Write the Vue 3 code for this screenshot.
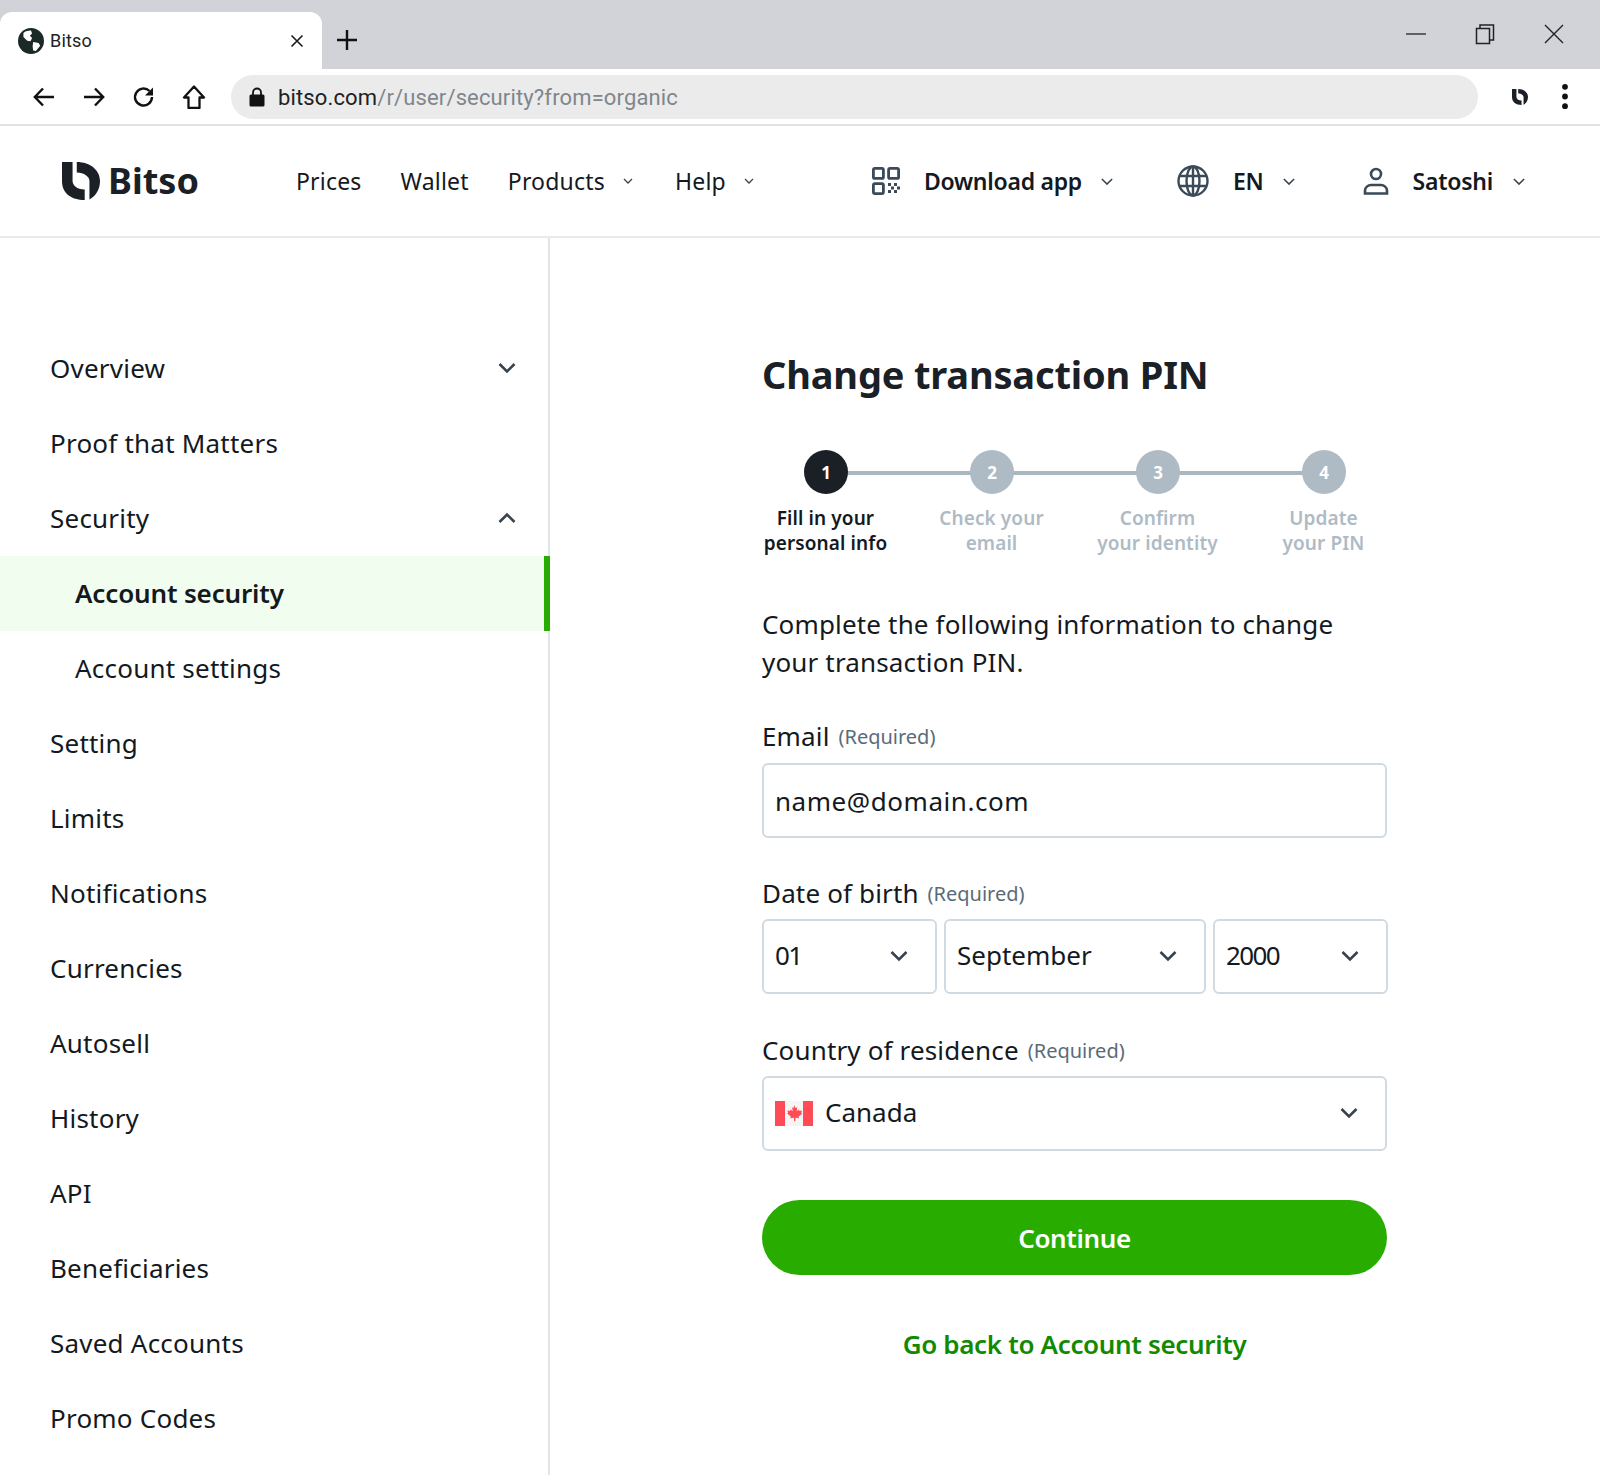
<script setup>
const nav = [
  { label: 'Overview', chevron: 'down' },
  { label: 'Proof that Matters' },
  { label: 'Security', chevron: 'up' },
  { label: 'Account security', sub: true, active: true },
  { label: 'Account settings', sub: true },
  { label: 'Setting' },
  { label: 'Limits' },
  { label: 'Notifications' },
  { label: 'Currencies' },
  { label: 'Autosell' },
  { label: 'History' },
  { label: 'API' },
  { label: 'Beneficiaries' },
  { label: 'Saved Accounts' },
  { label: 'Promo Codes' },
]
const steps = [
  { n: 1, a: 'Fill in your', b: 'personal info', on: true },
  { n: 2, a: 'Check your', b: 'email' },
  { n: 3, a: 'Confirm', b: 'your identity' },
  { n: 4, a: 'Update', b: 'your PIN' },
]
</script>

<template>
  <div class="page">
    <div class="tabstrip">
      <div class="tab">
        <svg class="favicon" viewBox="0 0 24 24"><circle cx="12" cy="12" r="12" fill="#1b2a26"/><path d="M5 4.500c2-1.600 4.500-2.300 7-2.200l1 2.700-2 2.200 2 2-1.500 3-3-.5-3.500-3.500zM14 13l5 .8 1.500 2.500-4 5-2.500-.5-.5-4z" fill="#fff"/></svg>
        <span class="tab-title">Bitso</span>
        <svg class="tab-x" viewBox="0 0 14 14"><path d="M1.500 1.500l11 11M12.500 1.500l-11 11" stroke="#1a1a1a" stroke-width="1.600"/></svg>
      </div>
      <svg class="newtab" viewBox="0 0 24 24"><path d="M12 2v20M2 12h20" stroke="#111" stroke-width="2.400"/></svg>
      <div class="winctl">
        <svg viewBox="0 0 22 22" class="win"><path d="M1 11h20" stroke="#222" stroke-width="1.300"/></svg>
        <svg viewBox="0 0 22 22" class="win"><path d="M2.500 5.500h13v15h-13zM6 5V2h13.500v15H16" fill="none" stroke="#222" stroke-width="1.500"/></svg>
        <svg viewBox="0 0 22 22" class="win"><path d="M2 2l18 18M20 2L2 20" stroke="#222" stroke-width="1.400"/></svg>
      </div>
    </div>

    <div class="toolbar">
      <div class="tool-icons">
        <svg viewBox="0 0 24 24" class="tool"><path d="M22 12H3M11 3.500L2.800 12l8.200 8.500" fill="none" stroke="#111" stroke-width="2.400"/></svg>
        <svg viewBox="0 0 24 24" class="tool"><path d="M2 12h19M13 3.500l8.200 8.500-8.200 8.500" fill="none" stroke="#111" stroke-width="2.400"/></svg>
        <svg viewBox="0 0 24 24" class="tool"><path d="M20 12a8.500 8.500 0 1 1-2.500-6" fill="none" stroke="#111" stroke-width="2.400"/><path d="M21 2.500v8h-8z" fill="#111"/></svg>
        <svg viewBox="0 0 24 24" class="tool"><path d="M12 1.500L2 12.500h4.500V23h11V12.500H22z" fill="none" stroke="#111" stroke-width="2.300" stroke-linejoin="round"/></svg>
      </div>
      <div class="omnibox">
        <svg class="lock" viewBox="0 0 16 20"><path d="M4 8V5.500a4 4 0 0 1 8 0V8" fill="none" stroke="#111" stroke-width="1.800"/><rect x="0.500" y="7.500" width="15" height="12" rx="1.500" fill="#111"/></svg>
        <span class="url"><span class="host">bitso.com</span>/r/user/security?from=organic</span>
      </div>
      <svg class="ext" viewBox="0 0 36 36">
        <path d="M0 0h10v18c0 4 4 8 11.500 8v10C9 36 0 30 0 18z" fill="#1a2026"/>
        <path d="M14 0c13 0 22 8 22 18 0 9-5 15-10 17.500V18c0-4-5-8-12-8z" fill="#1a2026"/>
      </svg>
      <svg class="menu-dots" viewBox="0 0 8 28"><circle cx="4" cy="4" r="3" fill="#111"/><circle cx="4" cy="14" r="3" fill="#111"/><circle cx="4" cy="24" r="3" fill="#111"/></svg>
    </div>

    <header class="site-header">
      <div class="logo">
        <svg class="logo-mark" viewBox="0 0 36 36">
          <path d="M0 0h10v18c0 4 4 8 11.500 8v10C9 36 0 30 0 18z" fill="#1a2026"/>
          <path d="M14 0c13 0 22 8 22 18 0 9-5 15-10 17.500V18c0-4-5-8-12-8z" fill="#1a2026"/>
        </svg>
        <span class="logo-text">Bitso</span>
      </div>
      <nav class="main-nav">
        <a>Prices</a>
        <a>Wallet</a>
        <a>Products<svg class="mini" viewBox="0 0 10 6"><path d="M1 1l4 4 4-4" fill="none" stroke="#38434d" stroke-width="1.300"/></svg></a>
        <a class="help">Help<svg class="mini" viewBox="0 0 10 6"><path d="M1 1l4 4 4-4" fill="none" stroke="#38434d" stroke-width="1.300"/></svg></a>
      </nav>
      <div class="head-actions">
        <div class="act act-dl">
          <svg class="qr" viewBox="0 0 28 28">
            <g fill="none" stroke="#3a4a58" stroke-width="2.800">
              <rect x="1.400" y="1.400" width="10" height="10" rx="1.500"/>
              <rect x="16.600" y="1.400" width="10" height="10" rx="1.500"/>
              <rect x="1.400" y="16.600" width="10" height="10" rx="1.500"/>
            </g>
            <g fill="#3a4a58">
              <rect x="16" y="16" width="3" height="3"/><rect x="22" y="16" width="3" height="3"/>
              <rect x="19" y="19.500" width="3" height="3"/><rect x="25" y="19.500" width="3" height="3"/>
              <rect x="16" y="23" width="3" height="3"/><rect x="22" y="23" width="3" height="3"/>
            </g>
          </svg>
          <b>Download app</b>
          <svg class="chev-s" viewBox="0 0 14 8"><path d="M1 1l6 6 6-6" fill="none" stroke="#38434d" stroke-width="1.800"/></svg>
        </div>
        <div class="act act-en">
          <svg class="globe" viewBox="0 0 32 32" fill="none" stroke="#3a4a58" stroke-width="2.400">
            <circle cx="16" cy="16" r="14.500"/><ellipse cx="16" cy="16" rx="6.500" ry="14.500"/><path d="M16 1.500v29M2.500 11h27M2.500 21h27"/>
          </svg>
          <b>EN</b>
          <svg class="chev-s" viewBox="0 0 14 8"><path d="M1 1l6 6 6-6" fill="none" stroke="#38434d" stroke-width="1.800"/></svg>
        </div>
        <div class="act act-user">
          <svg class="user" viewBox="0 0 26 28" fill="none" stroke="#3a4a58" stroke-width="2.600">
            <circle cx="13" cy="7" r="5"/><path d="M2 26.500v-3c0-3 3-5.500 6-5.500h10c3 0 6 2.500 6 5.500v3z"/>
          </svg>
          <b>Satoshi</b>
          <svg class="chev-s" viewBox="0 0 14 8"><path d="M1 1l6 6 6-6" fill="none" stroke="#38434d" stroke-width="1.800"/></svg>
        </div>
      </div>
    </header>

    <div class="body">
      <aside class="sidebar">
        <div v-for="item in nav" :key="item.label" class="side-item" :class="{ sub: item.sub, active: item.active }">
          <span class="side-text">{{ item.label }}</span>
          <svg v-if="item.chevron" class="side-chev" :class="{ up: item.chevron === 'up' }" viewBox="0 0 18 12"><path d="M1.500 2l7.500 7.500L16.500 2" fill="none" stroke="#38434d" stroke-width="2.600"/></svg>
        </div>
      </aside>

      <main class="content">
        <div class="form">
          <h1>Change transaction PIN</h1>
          <div class="stepper">
            <div v-for="s in steps" :key="s.n" class="step" :class="{ on: s.on }">
              <div class="dot">{{ s.n }}</div>
              <div class="step-label">{{ s.a }}<br />{{ s.b }}</div>
            </div>
          </div>
          <p class="lead">Complete the following information to change your transaction PIN.</p>

          <label class="lbl lbl-email">Email <small>(Required)</small></label>
          <div class="field">name@domain.com</div>

          <label class="lbl lbl-dob">Date of birth <small>(Required)</small></label>
          <div class="row3">
            <div class="field sel"><span class="digits">01</span><svg class="sel-chev" viewBox="0 0 18 12"><path d="M1.500 2l7.500 7.500L16.500 2" fill="none" stroke="#38434d" stroke-width="2.600"/></svg></div>
            <div class="field sel"><span class="sel-text">September</span><svg class="sel-chev" viewBox="0 0 18 12"><path d="M1.500 2l7.500 7.500L16.500 2" fill="none" stroke="#38434d" stroke-width="2.600"/></svg></div>
            <div class="field sel"><span class="digits">2000</span><svg class="sel-chev" viewBox="0 0 18 12"><path d="M1.500 2l7.500 7.500L16.500 2" fill="none" stroke="#38434d" stroke-width="2.600"/></svg></div>
          </div>

          <label class="lbl lbl-country">Country of residence <small>(Required)</small></label>
          <div class="field sel">
            <span class="country">
              <svg class="flag" viewBox="0 0 38 25">
                <rect width="38" height="25" fill="#f5f5f5"/>
                <rect width="10" height="25" fill="#ff4b55"/><rect x="28" width="10" height="25" fill="#ff4b55"/>
                <path d="M19 4l1.600 3 1.700-.8-.6 4 2.200-1.700.6 1.400 2.500-.4-.7 2.500 1 .6-3.700 3 .5 1.700-3.600-.5-.2 3.400h-1.200l-.2-3.400-3.600.5.5-1.700-3.700-3 1-.6-.7-2.500 2.500.4.600-1.400 2.200 1.700-.6-4 1.700.8z" fill="#ff4b55"/>
              </svg>
              <span class="sel-text">Canada</span>
            </span>
            <svg class="sel-chev" viewBox="0 0 18 12"><path d="M1.500 2l7.500 7.500L16.500 2" fill="none" stroke="#38434d" stroke-width="2.600"/></svg>
          </div>

          <button class="cta">Continue</button>
          <a class="back">Go back to Account security</a>
        </div>
      </main>
    </div>
  </div>
</template>

<style>
html, body { margin: 0; background: #fff; overflow: hidden; }
</style>

<style scoped>
.page {
  width: 1600px;
  height: 1475px;
  overflow: hidden;
  display: flex;
  flex-direction: column;
  font-family: "Noto Sans", "Open Sans", sans-serif;
  color: #13191e;
  background: #fff;
}
.tabstrip {
  height: 69px;
  flex: none;
  background: #d1d3d8;
  display: flex;
  align-items: flex-end;
}
.tab {
  width: 322px;
  height: 57px;
  box-sizing: border-box;
  background: #fff;
  border-radius: 12px 12px 0 0;
  display: flex;
  align-items: center;
  padding: 0 18px 0 18px;
}
.favicon { width: 26px; height: 26px; flex: none; }
.tab-title { font: 18px Roboto, sans-serif; margin-left: 6px; color: #222; flex: 1; letter-spacing: 0.2px; }
.tab-x { width: 14px; height: 14px; flex: none; }
.newtab { width: 24px; height: 24px; margin: 0 0 17px 13px; flex: none; }
.winctl { margin-left: auto; display: flex; gap: 47px; align-self: flex-start; margin-top: 23px; padding-right: 35px; }
.win { width: 22px; height: 22px; display: block; }
.toolbar {
  height: 57px;
  flex: none;
  box-sizing: border-box;
  border-bottom: 2px solid #dfe1e5;
  display: flex;
  align-items: center;
  padding: 0 26px 0 32px;
}
.tool-icons { display: flex; gap: 26px; }
.tool { width: 24px; height: 24px; display: block; }
.omnibox {
  width: 1247px;
  height: 44px;
  margin-left: 25px;
  border-radius: 22px;
  background: #ebebeb;
  display: flex;
  align-items: center;
  padding-left: 18px;
  box-sizing: border-box;
}
.lock { width: 16px; height: 20px; flex: none; }
.url { font: 22px Roboto, sans-serif; color: #80868b; margin-left: 13px; letter-spacing: 0.14px; padding-top: 2px; }
.host { color: #202124; }
.ext { width: 16px; height: 16px; margin-left: 34px; flex: none; }
.menu-dots { width: 8px; height: 27px; margin-left: 33px; flex: none; }

.site-header {
  height: 112px;
  flex: none;
  box-sizing: border-box;
  border-bottom: 2px solid #e8ebee;
  display: flex;
  align-items: center;
  padding-left: 62px;
}
.logo { display: flex; align-items: center; width: 234px; flex: none; }
.logo-mark { width: 38px; height: 38px; flex: none; }
.logo-text { font-size: 36px; font-weight: 700; color: #1a2026; margin-left: 8px; line-height: 40px; }
.main-nav { display: flex; align-items: center; gap: 39px; font-size: 23px; letter-spacing: 0.2px; }
.main-nav a { display: flex; align-items: center; }
.main-nav .help { margin-left: 3px; }
.mini { width: 10px; height: 6px; margin-left: 18px; }
.head-actions { margin-left: auto; display: flex; align-items: center; padding-right: 75px; }
.act { display: flex; align-items: center; font-size: 23px; }
.act b { font-weight: 600; letter-spacing: -0.25px; }
.act-dl { margin-right: 64px; }
.act-en { margin-right: 68px; }
.qr { width: 28px; height: 28px; margin-right: 24px; }
.globe { width: 32px; height: 32px; margin-right: 24px; }
.user { width: 26px; height: 28px; margin-right: 24px; }
.chev-s { width: 12px; height: 7px; margin-left: 19px; }
.act-user .chev-s { margin-left: 20px; }

.body { flex: 1; display: flex; min-height: 0; }
.sidebar {
  width: 550px;
  flex: none;
  box-sizing: border-box;
  border-right: 2px solid #e1e5e9;
  padding-top: 93px;
}
.side-item {
  height: 75px;
  display: flex;
  align-items: center;
  justify-content: space-between;
  padding: 0 32px 0 50px;
  font-size: 26px;
  box-sizing: border-box;
  letter-spacing: 0.22px;
}
.side-text { padding-bottom: 2px; }
.side-item.sub { padding-left: 75px; }
.side-item.active {
  background: #f1fdee;
  font-weight: 600;
  letter-spacing: -0.15px;
  margin-right: -2px;
  border-right: 6px solid #28ac00;
}
.side-chev { width: 18px; height: 12px; margin-bottom: 2px; }
.side-chev.up { transform: rotate(180deg); }

.content { flex: 1; padding: 110px 0 0 212px; }
.form { width: 625px; }
h1 { margin: 0; font-size: 38px; line-height: 52px; font-weight: 700; color: #1a2026; letter-spacing: -0.17px; }
.stepper { display: flex; margin: 50px 0 0 -19px; width: 664px; }
.step { width: 166px; display: flex; flex-direction: column; align-items: center; position: relative; }
.step:not(:last-child)::after {
  content: "";
  position: absolute;
  left: 83px;
  width: 166px;
  top: 21px;
  height: 4px;
  background: #a9b7c1;
}
.dot {
  width: 44px;
  height: 44px;
  border-radius: 50%;
  background: #aebbc5;
  color: #fff;
  font-size: 17px;
  font-weight: 700;
  display: flex;
  align-items: center;
  justify-content: center;
  z-index: 1;
}
.step.on .dot { background: #1a2026; }
.step-label {
  margin-top: 12px;
  margin-left: -1px;
  text-align: center;
  font-size: 19px;
  line-height: 25px;
  font-weight: 600;
  letter-spacing: 0.1px;
  color: #aebbc5;
  white-space: nowrap;
}
.step.on .step-label { color: #13191e; }
.lead { margin: 49px 0 0; font-size: 26px; line-height: 38px; width: 600px; letter-spacing: 0.16px; }
.lbl { display: block; margin: 35px 0 7px; font-size: 26px; line-height: 38px; height: 38px; letter-spacing: 0.15px; }
.lbl-email { margin: 36px 0 8px; }
.lbl-dob { margin-top: 36px; }
.lbl-country { margin-top: 37px; }
.lbl small { font-size: 20px; color: #5a6b78; margin-left: 2px; vertical-align: 2px; letter-spacing: 0; }
.field {
  height: 75px;
  box-sizing: border-box;
  border: 2px solid #d1dae1;
  border-radius: 6px;
  padding: 0 11px;
  display: flex;
  align-items: center;
  font-size: 26px;
  letter-spacing: 0.55px;
  background: #fff;
}
.sel { justify-content: space-between; padding-right: 27px; letter-spacing: 0; }
.sel-text { padding-bottom: 3px; }
.digits { letter-spacing: -1.6px; padding-bottom: 3px; }
.sel-chev { width: 18px; height: 12px; flex: none; margin-bottom: 2px; }
.row3 { display: grid; grid-template-columns: 175px 262px 175px; gap: 7px; }
.country { display: flex; align-items: center; gap: 12px; }
.flag { width: 38px; height: 25px; flex: none; }
.cta {
  display: block;
  width: 100%;
  height: 75px;
  margin-top: 49px;
  border: 0;
  border-radius: 38px;
  background: #28ac00;
  color: #fff;
  font: 600 26px "Noto Sans", sans-serif;
  letter-spacing: -0.35px;
}
.back {
  display: block;
  margin-top: 51px;
  text-align: center;
  font-size: 26px;
  line-height: 36px;
  font-weight: 600;
  letter-spacing: -0.34px;
  color: #118a00;
}
</style>
